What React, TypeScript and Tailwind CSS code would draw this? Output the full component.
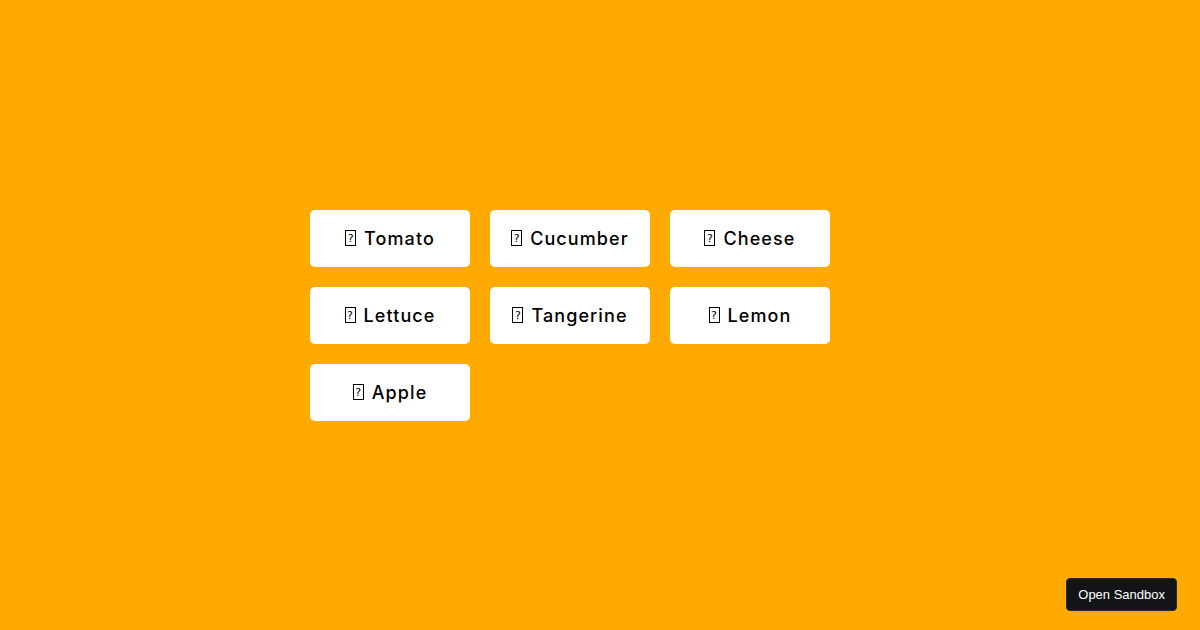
import React from 'react';

// emoji glyphs are missing in the reference, so they show up as boxes
const ITEMS = ['Tomato', 'Cucumber', 'Cheese', 'Lettuce', 'Tangerine', 'Lemon', 'Apple'];

const Tofu: React.FC = () => (
    <span className="inline-flex items-center justify-center w-[11px] h-[16px] border border-black text-[11px] leading-none font-['DejaVu_Sans',sans-serif] font-normal tracking-normal">
        ?
    </span>
);

const App: React.FC = () => {
    return (
        <div className="relative min-h-[630px] bg-[#ffaa00] flex items-center justify-center">
            <div className="w-[580px] grid grid-cols-[repeat(3,160px)] gap-5">
                {ITEMS.map(name => (
                    <div
                        key={name}
                        className="h-[57px] bg-white rounded-[5px] flex items-center justify-center gap-[8px] text-[18px] font-medium text-black tracking-[1.1px] font-['Inter',sans-serif]"
                    >
                        <Tofu />
                        <span className="pt-[1px]">{name}</span>
                    </div>
                ))}
            </div>
            <button className="absolute right-[23px] bottom-[19px] h-[33px] px-[11px] bg-[#131418] border border-[#2a2b30] rounded-[4px] text-white text-[13px] font-['Liberation_Sans',sans-serif]">
                Open Sandbox
            </button>
        </div>
    );
};

export default App;
